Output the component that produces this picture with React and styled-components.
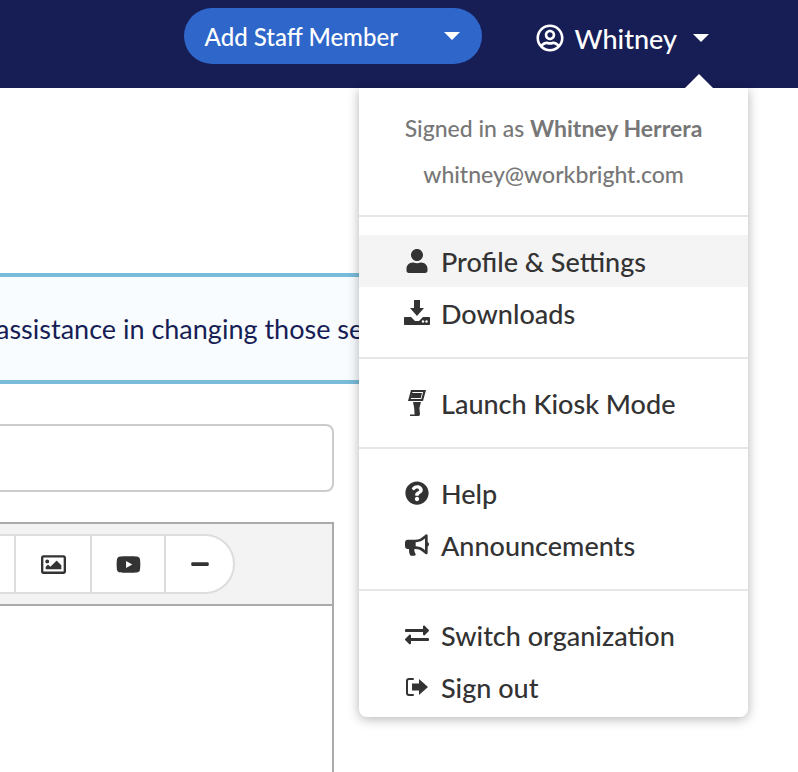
import styled, { createGlobalStyle } from "styled-components";
import {
  FaBullhorn,
  FaExchangeAlt,
  FaMinus,
  FaQuestionCircle,
  FaRegImage,
  FaRegUserCircle,
  FaUser,
  FaYoutube,
} from "react-icons/fa";

const GlobalStyle = createGlobalStyle`
  html, body {
    margin: 0;
    height: 100%;
    overflow: hidden;
    background: #fff;
    font-family: Lato, "Liberation Sans", sans-serif;
  }
`;

const Nav = styled.header`
  height: 88px;
  background: #171d55;
  display: flex;
  justify-content: flex-end;
  align-items: flex-start;
  padding-right: 89px;
  color: #fff;
`;

const AddButton = styled.button`
  width: 298px;
  height: 56px;
  margin-top: 8px;
  padding: 0 22px 0 21px;
  border: 0;
  border-radius: 28px;
  background: #2f66c9;
  color: #fff;
  font: 500 24px Lato, sans-serif;
  display: flex;
  align-items: center;
  justify-content: space-between;
`;

const Caret = styled.span`
  width: 0;
  height: 0;
  border-left: 8px solid transparent;
  border-right: 8px solid transparent;
  border-top: 8px solid #fff;
`;

const UserMenu = styled.div`
  position: relative;
  margin-left: 54px;
  height: 56px;
  margin-top: 10px;
  display: flex;
  align-items: center;
  font-size: 27px;
  font-weight: 500;
`;

const UserName = styled.span`
  margin: 0 16px 0 11px;
`;

const Dropdown = styled.div`
  position: absolute;
  top: 78px;
  right: -39px;
  width: 389px;
  height: 629px;
  box-sizing: border-box;
  padding-top: 17px;
  background: #fff;
  border-radius: 0 0 8px 8px;
  box-shadow: 0 2px 12px rgba(0, 0, 0, 0.3);
  color: #333;
  z-index: 5;

  &::before {
    content: "";
    position: absolute;
    top: -14px;
    right: 35px;
    border-left: 14px solid transparent;
    border-right: 14px solid transparent;
    border-bottom: 14px solid #fff;
  }
`;

const Identity = styled.div`
  text-align: center;
  font-size: 23px;
  line-height: 46px;
  color: #777;

  b {
    font-weight: 700;
  }
`;

const Divider = styled.hr`
  margin: 18px 0;
  border: 0;
  border-top: 2px solid #e6e6e6;
`;

const Item = styled.div`
  height: 52px;
  display: flex;
  align-items: center;
  padding-left: 43px;
  font-size: 27px;
  background: ${(props) => (props.$active ? "#f4f4f4" : "transparent")};
`;

const ItemIcon = styled.span`
  width: 30px;
  margin-right: 9px;
  display: flex;
  justify-content: center;
  align-items: center;
  font-size: 24px;
  color: #333;
`;

const Main = styled.main`
  height: 684px;
  box-sizing: border-box;
  margin-left: -20px;
  padding-top: 185px;
  overflow: hidden;
`;

const Alert = styled.div`
  width: 420px;
  height: 111px;
  box-sizing: border-box;
  border-top: 4px solid #78bcd9;
  border-bottom: 4px solid #78bcd9;
  background: #f8fcfe;
  color: #171d55;
  font-size: 27px;
  display: flex;
  align-items: center;
  padding-left: 16px;
  white-space: nowrap;
`;

const Field = styled.div`
  width: 354px;
  height: 68px;
  box-sizing: border-box;
  margin-top: 40px;
  border: 2px solid #ccc;
  border-radius: 8px;
`;

const Editor = styled.div`
  width: 354px;
  height: 400px;
  box-sizing: border-box;
  margin-top: 30px;
  border: 2px solid #aaa;
`;

const Toolbar = styled.div`
  background: #f3f3f3;
  border-bottom: 2px solid #aaa;
  padding: 10px 0;
`;

const ToolGroup = styled.div`
  display: flex;
  width: fit-content;
  height: 60px;
  box-sizing: border-box;
  background: #fff;
  border: 2px solid #ddd;
  border-radius: 0 30px 30px 0;
`;

const Tool = styled.div`
  width: ${(props) => props.$width}px;
  box-sizing: border-box;
  display: flex;
  align-items: center;
  justify-content: center;
  color: #333;
  font-size: 25px;

  & + & {
    border-left: 2px solid #ddd;
  }
`;

const KioskIcon = () => (
  <svg width="20" height="28" viewBox="0 0 20 28" fill="#333">
    <path d="M4 1h15l-3 11H1zM5.5 3 3.8 10h10.6l1.7-7z" fillRule="evenodd" />
    <path d="M5 4h10l-1.2 5H3.8z" />
    <path d="M6 13h8l-1.6 6 .6 6c0 1-.6 2-1.6 2H3v-1.6h4.6l-.4-6.4z" />
  </svg>
);

const DownloadIcon = () => (
  <svg width="26" height="26" viewBox="0 0 26 26" fill="#333">
    <path d="M10 0h6v8h4l-7 8-7-8h4z" />
    <path d="M1 17h6l4 4h4l4-4h6c.6 0 1 .4 1 1v6c0 .6-.4 1-1 1H1c-.6 0-1-.4-1-1v-6c0-.6.4-1 1-1z" />
    <circle cx="19" cy="21.5" r="1.2" fill="#fff" />
    <circle cx="22.5" cy="21.5" r="1.2" fill="#fff" />
  </svg>
);

const SignOutIcon = () => (
  <svg width="24" height="20" viewBox="0 0 24 20" fill="#333">
    <path d="M8 2H4C2.900 2 2 2.900 2 4v12c0 1.100.9 2 2 2h4" fill="none" stroke="#333" strokeWidth="2" strokeLinecap="round" />
    <path d="M7 6.500h7V2l9 8-9 8v-4.500H7z" />
  </svg>
);

export default function App() {
  return (
    <>
      <GlobalStyle />
      <Nav>
        <AddButton>
          Add Staff Member
          <Caret />
        </AddButton>
        <UserMenu>
          <FaRegUserCircle size={28} />
          <UserName>Whitney</UserName>
          <Caret />
          <Dropdown>
            <Identity>
              Signed in as <b>Whitney Herrera</b>
              <br />
              whitney@workbright.com
            </Identity>
            <Divider />
            <Item $active>
              <ItemIcon>
                <FaUser />
              </ItemIcon>
              Profile &amp; Settings
            </Item>
            <Item>
              <ItemIcon>
                <DownloadIcon />
              </ItemIcon>
              Downloads
            </Item>
            <Divider />
            <Item>
              <ItemIcon>
                <KioskIcon />
              </ItemIcon>
              Launch Kiosk Mode
            </Item>
            <Divider />
            <Item>
              <ItemIcon>
                <FaQuestionCircle />
              </ItemIcon>
              Help
            </Item>
            <Item>
              <ItemIcon>
                <FaBullhorn />
              </ItemIcon>
              Announcements
            </Item>
            <Divider />
            <Item>
              <ItemIcon>
                <FaExchangeAlt />
              </ItemIcon>
              Switch organization
            </Item>
            <Item>
              <ItemIcon>
                <SignOutIcon />
              </ItemIcon>
              Sign out
            </Item>
          </Dropdown>
        </UserMenu>
      </Nav>
      <Main>
        <Alert>assistance in changing those settings.</Alert>
        <Field />
        <Editor>
          <Toolbar>
            <ToolGroup>
              <Tool $width={30} />
              <Tool $width={76}>
                <FaRegImage />
              </Tool>
              <Tool $width={74}>
                <FaYoutube />
              </Tool>
              <Tool $width={69}>
                <FaMinus size={20} />
              </Tool>
            </ToolGroup>
          </Toolbar>
        </Editor>
      </Main>
    </>
  );
}
